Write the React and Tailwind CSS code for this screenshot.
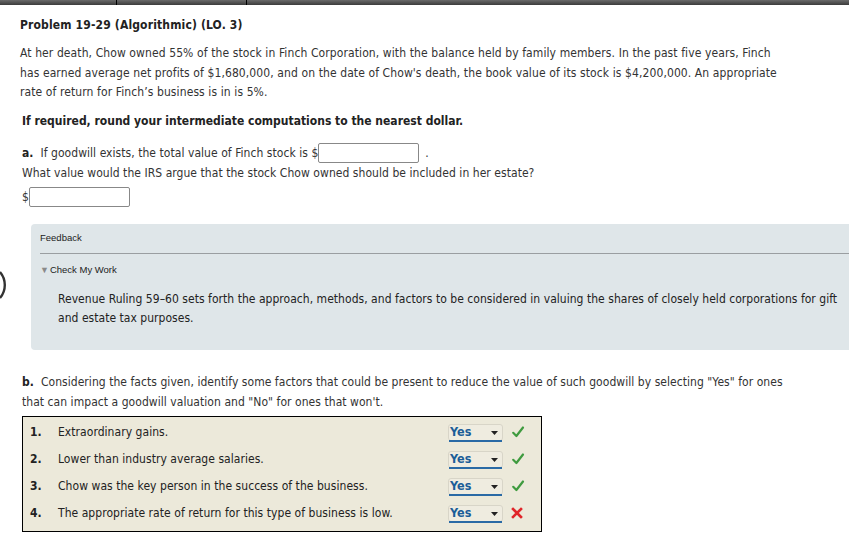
import React from "react";

const Check = () => (
  <svg width="14" height="14" viewBox="0 0 14 14" className="block">
    <path d="M2.2 7.8 L5.4 11 L12 2.5" fill="none" stroke="#3f9b3f" strokeWidth="2.2" strokeLinecap="round" strokeLinejoin="round" />
  </svg>
);
const Cross = () => (
  <svg width="12" height="12" viewBox="0 0 12 12" className="block">
    <path d="M2 2 L10 10 M10 2 L2 10" fill="none" stroke="#e0262a" strokeWidth="2.6" strokeLinecap="square" />
  </svg>
);

const Select = () => (
  <div className="relative w-[55px] h-[17px] rounded-[3px] border border-[#d8d5c8] bg-[#efece0] flex items-center">
    <span className="pl-[1px] text-[12.5px] font-bold text-[#1c5e98] leading-none">Yes</span>
    <svg width="7" height="5" viewBox="0 0 7 5" className="absolute right-[4px] top-[6px]">
      <path d="M0 0 H7 L3.5 4 Z" fill="#222" />
    </svg>
    <div className="absolute left-0 right-0 bottom-[-2px] h-[2px] bg-[#2a6aa5]" />
  </div>
);

const rows = [
  ["1.", "Extraordinary gains.", true],
  ["2.", "Lower than industry average salaries.", true],
  ["3.", "Chow was the key person in the success of the business.", true],
  ["4.", "The appropriate rate of return for this type of business is low.", false],
];

export default function App() {
  return (
    <div className="relative w-[849px] h-[552px] overflow-hidden bg-white text-[#333] font-['DejaVu_Sans_Condensed','DejaVu_Sans',sans-serif] text-[12px] tracking-[0.05px]">
      <div className="h-[5px] w-full bg-gradient-to-b from-[#6a6a6a] to-[#3c3c3c] flex">
        <div className="w-[117px] border-r border-black" />
        <div className="w-[130px] border-r border-black" />
      </div>
      <svg width="8" height="40" viewBox="0 0 8 40" className="absolute left-0 top-[265px]">
        <path d="M0 7 A20 20 0 0 1 0 33" fill="none" stroke="#333" strokeWidth="2.4" />
      </svg>
      <div className="pl-[20px]">
        <div className="mt-[8px] font-bold text-[#222] leading-[24px] tracking-[0.15px]">Problem 19-29 (Algorithmic) (LO. 3)</div>
        <p className="mt-[7px] w-[764px] leading-[19.5px] tracking-[0.1px]">
          At her death, Chow owned 55% of the stock in Finch Corporation, with the balance held by family members. In the past five years, Finch has earned average net profits of $1,680,000, and on the date of Chow's death, the book value of its stock is $4,200,000. An appropriate rate of return for Finch’s business is in is 5%.
        </p>
        <div className="mt-[8px] pl-[2px] font-bold text-[#222] leading-[20px] tracking-normal">If required, round your intermediate computations to the nearest dollar.</div>
        <div className="mt-[12px] pl-[2px] flex items-center leading-[20px]">
          <span><b className="text-[#222]">a.</b>&nbsp; If goodwill exists, the total value of Finch stock is $</span>
          <div className="w-[101px] h-[20px] border border-[#888] rounded-[2px] bg-white" />
          <span className="ml-[6px]">.</span>
        </div>
        <div className="pl-[2px] leading-[21px]">What value would the IRS argue that the stock Chow owned should be included in her estate?</div>
        <div className="mt-[3px] pl-[2px] flex items-center">
          <span>$</span>
          <div className="w-[101px] h-[20px] border border-[#888] rounded-[2px] bg-white" />
        </div>
        <div className="mt-[17px] ml-[11px] h-[126px] rounded-l-[4px] bg-[#dfe6e9] pl-[9px] tracking-normal">
          <div className="h-[29px] flex items-center font-['Liberation_Sans_Narrow','Liberation_Sans',sans-serif] text-[9.5px] text-[#222]">Feedback</div>
          <div className="h-px bg-[#9a9ea1]" />
          <div className="mt-[10px] flex items-center font-['Liberation_Sans_Narrow','Liberation_Sans',sans-serif] text-[9.5px] text-[#222] leading-[12px]">
            <span className="text-[#8a8a8a] text-[9px] mr-[1px]">▼</span>Check My Work
          </div>
          <p className="mt-[14px] ml-[18px] leading-[19.5px] text-[#222] w-[790px] tracking-[0.035px]">
            Revenue Ruling 59–60 sets forth the approach, methods, and factors to be considered in valuing the shares of closely held corporations for gift and estate tax purposes.
          </p>
        </div>
        <p className="mt-[22px] pl-[2px] w-[765px] leading-[20px]">
          <b className="text-[#222]">b.</b>&nbsp; Considering the facts given, identify some factors that could be present to reduce the value of such goodwill by selecting "Yes" for ones that can impact a goodwill valuation and "No" for ones that won't.
        </p>
        <div className="mt-[4px] ml-[2px] w-[520px] border border-black bg-[#ece9da] pt-[2px] pb-[4px]">
          {rows.map(([n, t, ok]) => (
            <div key={n} className="h-[27px] flex items-center">
              <span className="w-[35px] pl-[7px] font-bold text-[#222]">{n}</span>
              <span className="w-[390px] text-[#222]">{t}</span>
              <Select />
              <span className="ml-[8px]">{ok ? <Check /> : <Cross />}</span>
            </div>
          ))}
        </div>
      </div>
    </div>
  );
}
